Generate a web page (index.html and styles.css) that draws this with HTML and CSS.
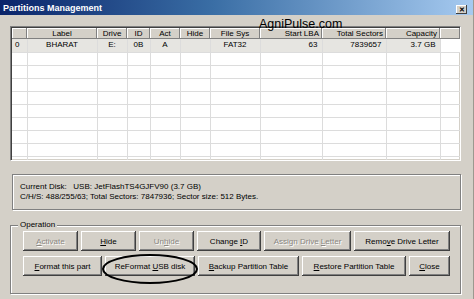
FILE: index.html
```html
<!DOCTYPE html>
<html>
<head>
<meta charset="utf-8">
<link rel="stylesheet" href="styles.css">
</head>
<body>
<div class="window">
  <div class="titlebar">
    <span class="title">Partitions Management</span>
    <span class="close-btn">✕</span>
  </div>
  <div class="main">
    <span class="watermark">AgniPulse.com</span>
    <div class="list">
      <table class="grid">
        <colgroup>
          <col class="c-num"><col class="c-label"><col class="c-drive"><col class="c-id"><col class="c-act"><col class="c-hide"><col class="c-fs"><col class="c-lba"><col class="c-tot"><col class="c-cap"><col class="c-fill">
        </colgroup>
        <thead>
          <tr>
            <th></th><th>Label</th><th>Drive</th><th>ID</th><th>Act</th><th>Hide</th><th>File Sys</th><th class="r">Start LBA</th><th class="r">Total Sectors</th><th class="r">Capacity</th><th></th>
          </tr>
        </thead>
        <tbody>
          <tr class="sel">
            <td class="l">0</td><td>BHARAT</td><td>E:</td><td>0B</td><td>A</td><td></td><td>FAT32</td><td class="r">63</td><td class="r">7839657</td><td class="r">3.7 GB</td><td class="blank"></td>
          </tr>
          <tr><td></td><td></td><td></td><td></td><td></td><td></td><td></td><td></td><td></td><td></td><td></td></tr>
          <tr><td></td><td></td><td></td><td></td><td></td><td></td><td></td><td></td><td></td><td></td><td></td></tr>
          <tr><td></td><td></td><td></td><td></td><td></td><td></td><td></td><td></td><td></td><td></td><td></td></tr>
          <tr><td></td><td></td><td></td><td></td><td></td><td></td><td></td><td></td><td></td><td></td><td></td></tr>
          <tr><td></td><td></td><td></td><td></td><td></td><td></td><td></td><td></td><td></td><td></td><td></td></tr>
          <tr><td></td><td></td><td></td><td></td><td></td><td></td><td></td><td></td><td></td><td></td><td></td></tr>
          <tr><td></td><td></td><td></td><td></td><td></td><td></td><td></td><td></td><td></td><td></td><td></td></tr>
          <tr><td></td><td></td><td></td><td></td><td></td><td></td><td></td><td></td><td></td><td></td><td></td></tr>
          <tr><td></td><td></td><td></td><td></td><td></td><td></td><td></td><td></td><td></td><td></td><td></td></tr>
        </tbody>
      </table>
    </div>
    <div class="info">
      <div>Current Disk:&nbsp;&nbsp; USB: JetFlashTS4GJFV90 (3.7 GB)</div>
      <div>C/H/S: 488/255/63; Total Sectors: 7847936; Sector size: 512 Bytes.</div>
    </div>
    <div class="group">
      <span class="legend">Operation</span>
      <div class="row">
        <span class="btn dis w-act"><span><u>A</u>ctivate</span></span>
        <span class="btn w-hide"><span><u>H</u>ide</span></span>
        <span class="btn dis w-unhide"><span>Un<u>h</u>ide</span></span>
        <span class="btn w-chg"><span>Change <u>I</u>D</span></span>
        <span class="btn dis w-assign"><span>Assign Drive <u>L</u>etter</span></span>
        <span class="btn w-remove"><span>Remo<u>v</u>e Drive Letter</span></span>
      </div>
      <div class="row">
        <span class="btn w-format"><span><u>F</u>ormat this part</span></span>
        <span class="btn w-reformat"><span>ReFormat <u>U</u>SB disk</span><svg class="ellipse" width="100" height="34" viewBox="0 0 100 34"><ellipse cx="50" cy="16" rx="47" ry="14" fill="none" stroke="#000" stroke-width="2"/></svg></span>
        <span class="btn w-backup"><span><u>B</u>ackup Partition Table</span></span>
        <span class="btn w-restore"><span><u>R</u>estore Partition Table</span></span>
        <span class="btn w-close"><span><u>C</u>lose</span></span>
      </div>
    </div>
  </div>
</div>
</body>
</html>
```
FILE: styles.css
```css
* { box-sizing: border-box; }
html, body { margin: 0; padding: 0; background: #d4d0c8; }
.window {
  width: 474px;
  height: 299px;
  overflow: hidden;
  background: #d4d0c8;
  font-family: "Liberation Sans", Arial, sans-serif;
  font-size: 8px;
  color: #000;
  display: flex;
  flex-direction: column;
  border-right: 1px solid #9c988f;
}
.titlebar {
  height: 15px;
  flex: none;
  background: linear-gradient(to right, #0a246a 0%, #3a6ea5 45%, #a6caf0 100%);
  display: flex;
  align-items: center;
  justify-content: space-between;
  padding: 0 6px 0 3px;
}
.title {
  color: #fff;
  font-weight: bold;
  font-size: 9px;
}
.close-btn {
  width: 11px;
  height: 9px;
  margin-top: 3px;
  background: #d4d0c8;
  box-shadow: inset -1px -1px #404040, inset 1px 1px #fff;
  font-size: 7px;
  line-height: 9px;
  text-align: center;
  color: #000;
  font-weight: bold;
}
.main {
  position: relative;
  flex: 1;
  padding: 11px 12px 0 10px;
  display: flex;
  flex-direction: column;
}
.main > * { flex: none; }
.watermark {
  position: absolute;
  left: 259px;
  top: 2px;
  font-size: 12.5px;
  line-height: 14px;
  color: #000;
  z-index: 2;
}
.list {
  height: 135px;
  background: #fff;
  border-top: 1px solid #808080;
  border-left: 1px solid #808080;
  border-right: 1px solid #fff;
  border-bottom: 1px solid #fff;
  box-shadow: inset 1px 1px #404040, inset -1px -1px #d4d0c8;
  padding: 1px 0 0 1px;
  overflow: hidden;
}
.grid {
  border-collapse: collapse;
  table-layout: fixed;
  width: 448px;
}
.c-num { width: 15px; }
.c-label { width: 70px; }
.c-drive { width: 30px; }
.c-id { width: 23px; }
.c-act { width: 30px; }
.c-hide { width: 30px; }
.c-fs { width: 50px; }
.c-lba { width: 62px; }
.c-tot { width: 64px; }
.c-cap { width: 54px; }
.c-fill { width: 20px; }
.grid th {
  height: 11px;
  padding: 0 3px;
  font-weight: normal;
  background: #d4d0c8;
  text-align: center;
  white-space: nowrap;
  overflow: hidden;
  box-shadow: inset -1px -1px #808080, inset 1px 1px #fff;
  line-height: 11px;
}
.grid th.r { text-align: right; }
.grid td {
  height: 13px;
  padding: 0 4px;
  border-right: 1px solid #dcdcdc;
  border-bottom: 1px solid #dcdcdc;
  text-align: center;
  white-space: nowrap;
  overflow: hidden;
  line-height: 12px;
}
.grid td.r { text-align: right; }
.grid td.l { text-align: left; padding-left: 3px; }
.grid tr.sel td { background: #e6e5e1; }
.grid tr.sel td.blank { background: #fff; }
.info {
  margin: 13px 0 0 2px;
  height: 36px;
  border: 1px solid #808080;
  box-shadow: inset 1px 1px #fff, 1px 1px #fff;
  padding: 7px 0 0 7px;
  line-height: 9.5px;
}
.group {
  position: relative;
  margin-top: 15px;
  height: 69px;
  padding: 5px 0 0 12px;
  border: 1px solid #808080;
  box-shadow: inset 1px 1px #fff, 1px 1px #fff;
}
.legend {
  position: absolute;
  left: 7px;
  top: -6px;
  padding: 0 2px;
  line-height: 10px;
  background: #d4d0c8;
}
.row {
  display: flex;
  gap: 3px;
  height: 20px;
}
.row + .row { margin-top: 5px; }
.btn {
  position: relative;
  flex: none;
  height: 20px;
  display: flex;
  align-items: center;
  justify-content: center;
  background: #d4d0c8;
  box-shadow: inset -1px -1px #404040, inset 1px 1px #fff, inset -2px -2px #808080;
  white-space: nowrap;
}
.btn.dis {
  color: #8a8782;
  text-shadow: 1px 1px #fff;
}
.w-act { width: 55px; }
.w-hide { width: 55px; }
.w-unhide { width: 55px; }
.w-chg { width: 64px; }
.w-assign { width: 87px; }
.w-remove { width: 96px; }
.w-format { width: 79px; }
.w-reformat { width: 90px; }
.w-backup { width: 101px; }
.w-restore { width: 104px; }
.w-close { width: 41px; }
.ellipse {
  position: absolute;
  left: -5px;
  top: -3px;
  pointer-events: none;
}
```
